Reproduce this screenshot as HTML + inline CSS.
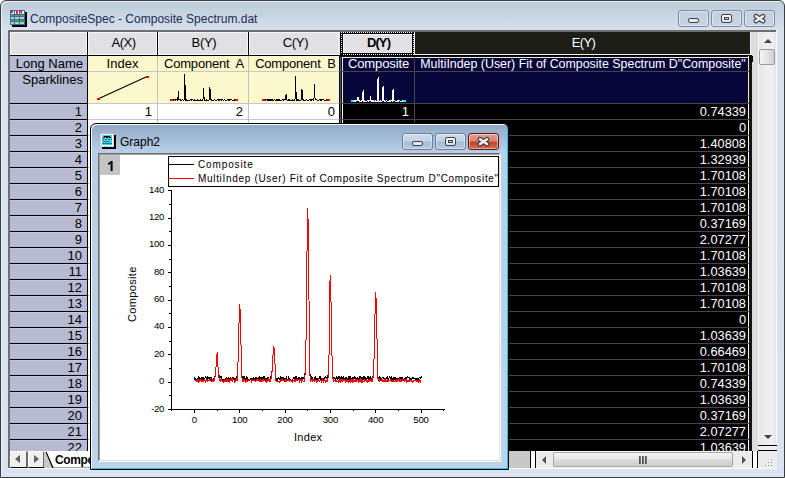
<!DOCTYPE html>
<html><head><meta charset="utf-8">
<style>
*{box-sizing:border-box}
html,body{margin:0;padding:0;width:785px;height:478px;overflow:hidden;background:#fff}
body{position:relative;font-family:"Liberation Sans",sans-serif}
.a{position:absolute}
#win{position:absolute;left:0;top:0;width:785px;height:478px;border:1px solid #3c3c3c;border-radius:6px 6px 0 0;
 background:linear-gradient(#bccbda 0px,#d6e2ee 30px,#d9e4f0 478px);box-shadow:inset 1px 1px 0 #eef3f8}
.ttl{position:absolute;left:30px;top:12px;font-size:12px;line-height:14px;color:#1e2a50;white-space:nowrap}
.tb{position:absolute;height:17px;border:1px solid #7d8aa3;border-radius:3px;background:linear-gradient(#c2d0df,#c6d3e2);box-shadow:inset 0 0 0 1px rgba(255,255,255,.45)}
.cell{position:absolute;font-size:13px;white-space:nowrap;line-height:16px}
.rh{position:absolute;left:10px;width:77px;height:16px;text-align:right;padding-right:5px;font-size:13px;line-height:16px;color:#000}
.ev{position:absolute;left:415px;width:333px;height:16px;text-align:right;padding-right:2px;font-size:12.8px;line-height:16px;color:#fff}
.hl{position:absolute;left:10px;width:77px;height:1px;background:#000;box-shadow:0 1px 0 #c6c9de}
.dl{position:absolute;left:339px;width:410px;height:1px;background:#464646}
</style></head><body>
<div id="win"></div>
<svg class="a" style="left:10px;top:10px" width="17" height="17" viewBox="0 0 17 17" shape-rendering="crispEdges">
<rect x="2" y="2" width="15" height="15" fill="#000"/>
<rect x="0" y="0" width="15" height="15" fill="#5858c4"/>
<rect x="1" y="1" width="3" height="3" fill="#fff"/><rect x="5" y="1" width="4" height="3" fill="#fff"/><rect x="10" y="1" width="4" height="3" fill="#fff"/><rect x="1" y="5" width="3" height="1" fill="#10d010"/><rect x="5" y="5" width="4" height="1" fill="#10d010"/><rect x="10" y="5" width="4" height="1" fill="#10d010"/><rect x="1" y="7" width="3" height="2" fill="#90f090"/><rect x="5" y="7" width="4" height="2" fill="#90f090"/><rect x="10" y="7" width="4" height="2" fill="#90f090"/><rect x="1" y="10" width="3" height="1" fill="#10d010"/><rect x="5" y="10" width="4" height="1" fill="#10d010"/><rect x="10" y="10" width="4" height="1" fill="#10d010"/><rect x="1" y="12" width="3" height="2" fill="#90f090"/><rect x="5" y="12" width="4" height="2" fill="#90f090"/><rect x="10" y="12" width="4" height="2" fill="#90f090"/><rect x="1" y="1" width="2" height="2" fill="#f22"/><rect x="6" y="1" width="2" height="3" fill="#f22"/><rect x="10" y="1" width="2" height="2" fill="#f22"/><rect x="11" y="3" width="2" height="1" fill="#f88"/>
</svg>
<div class="ttl">CompositeSpec - Composite Spectrum.dat</div>
<div class="tb" style="left:678px;top:10px;width:31px"></div><div class="tb" style="left:711px;top:10px;width:31px"></div><div class="tb" style="left:744px;top:10px;width:31px"></div>
<div class="a" style="left:688px;top:18px;width:11px;height:5px;border:1px solid #3c4250;border-radius:2px;background:#ebe9e4"></div><div class="a" style="left:721px;top:14px;width:11px;height:9px;border:1px solid #3c4250;border-radius:2px;background:linear-gradient(#fff,#e2e0da)"></div><div class="a" style="left:724px;top:17px;width:5px;height:3px;border:1px solid #3c4250;background:#c8d0dc"></div><svg class="a" style="left:752px;top:12px" width="15" height="13" viewBox="0 0 15 13"><path d="M4 4.3 L11 9 M11 4.3 L4 9" stroke="#3a3e4a" stroke-width="4.8" stroke-linecap="round"/><path d="M4 4.3 L11 9 M11 4.3 L4 9" stroke="#f4f3f0" stroke-width="2.5" stroke-linecap="round"/></svg>

<div class="a" style="left:8px;top:30px;width:768px;height:438px;background:#dcdbe0;border-top:2px solid #6e6e6e;border-left:2px solid #6e6e6e"></div>
<div class="a" style="left:776px;top:30px;width:1px;height:439px;background:#fff"></div>
<div class="a" style="left:8px;top:468px;width:769px;height:1px;background:#fff"></div>
<div class="a" style="left:10px;top:32px;width:330px;height:23px;background:#e1e0e4"></div>
<div class="a" style="left:10px;top:32px;width:1px;height:23px;background:#f6f6f8"></div>
<div class="a" style="left:88px;top:32px;width:1px;height:23px;background:#f6f6f8"></div>
<div class="a" style="left:158px;top:32px;width:1px;height:23px;background:#f6f6f8"></div>
<div class="a" style="left:249px;top:32px;width:1px;height:23px;background:#f6f6f8"></div>
<div class="a" style="left:86px;top:32px;width:1px;height:23px;background:#f6f6f8"></div>
<div class="a" style="left:156px;top:32px;width:1px;height:23px;background:#f6f6f8"></div>
<div class="a" style="left:247px;top:32px;width:1px;height:23px;background:#f6f6f8"></div>
<div class="a" style="left:338px;top:32px;width:1px;height:23px;background:#f6f6f8"></div>
<div class="a" style="left:10px;top:54px;width:330px;height:1px;background:#f6f6f8"></div>
<div class="a" style="left:10px;top:32px;width:330px;height:1px;background:#f6f6f8"></div>
<div class="a" style="left:415px;top:32px;width:335px;height:22px;background:#1e1e18"></div>
<div class="a" style="left:415px;top:54px;width:336px;height:1px;background:#f0f0f0"></div>
<div class="a" style="left:750px;top:32px;width:1px;height:23px;background:#f0f0f0"></div>
<div class="a" style="left:87px;top:32px;width:1px;height:23px;background:#000"></div>
<div class="a" style="left:157px;top:32px;width:1px;height:23px;background:#000"></div>
<div class="a" style="left:248px;top:32px;width:1px;height:23px;background:#000"></div>
<div class="a" style="left:10px;top:55px;width:742px;height:1px;background:#000"></div>
<div class="a" style="left:340px;top:32px;width:75px;height:24px;background:#000"></div>
<div class="a" style="left:343px;top:34px;width:69px;height:19px;background:#e1e0e4;border-top:1px solid #f6f6f8;border-left:1px solid #f6f6f8"></div>
<div class="a" style="left:341px;top:32px;width:1px;height:22px;background:repeating-linear-gradient(#fff 0 1px,transparent 1px 2px)"></div>
<div class="a" style="left:342px;top:32px;width:70px;height:1px;background:repeating-linear-gradient(90deg,transparent 0 1px,#fff 1px 2px)"></div>
<div class="a" style="left:342px;top:54px;width:70px;height:1px;background:repeating-linear-gradient(90deg,transparent 0 1px,#fff 1px 2px)"></div>
<div class="a" style="left:413px;top:33px;width:1px;height:22px;background:repeating-linear-gradient(transparent 0 1px,#fff 1px 2px)"></div>
<div class="a" style="left:414px;top:32px;width:1px;height:23px;background:#f0f0f0"></div>
<div class="cell" style="left:89px;top:35px;width:69px;text-align:center;color:#000;letter-spacing:-0.5px">A(X)</div>
<div class="cell" style="left:159px;top:35px;width:90px;text-align:center;color:#000;letter-spacing:-0.3px">B(Y)</div>
<div class="cell" style="left:250px;top:35px;width:91px;text-align:center;color:#000;letter-spacing:-0.3px">C(Y)</div>
<div class="cell" style="left:341px;top:35px;width:75px;text-align:center;color:#000;font-weight:bold;letter-spacing:-0.9px">D(Y)</div>
<div class="cell" style="left:416px;top:35px;width:335px;text-align:center;color:#fff;letter-spacing:-0.6px">E(Y)</div>

<div class="a" style="left:10px;top:56px;width:77px;height:395px;background:#b6bad3"></div>
<div class="a" style="left:87px;top:56px;width:1px;height:395px;background:#000"></div>
<div class="hl" style="top:71px"></div>
<div class="hl" style="top:103px"></div>
<div class="rh" style="top:56px;padding-right:4px">Long Name</div>
<div class="rh" style="top:72px;padding-right:4px">Sparklines</div>

<div class="a" style="left:88px;top:56px;width:251px;height:48px;background:#fbf8cb"></div>
<div class="a" style="left:88px;top:71px;width:251px;height:1px;background:#c8c8c8"></div>
<div class="a" style="left:88px;top:103px;width:251px;height:1px;background:#c8c8c8"></div>
<div class="a" style="left:157px;top:56px;width:1px;height:67px;background:#c0c0c0"></div>
<div class="a" style="left:248px;top:56px;width:1px;height:67px;background:#c0c0c0"></div>
<div class="cell" style="left:88px;top:56px;width:69px;text-align:center">Index</div>
<div class="cell" style="left:159px;top:56px;width:90px;text-align:center;letter-spacing:-0.2px">Component&nbsp; A</div>
<div class="cell" style="left:250px;top:56px;width:91px;text-align:center;letter-spacing:-0.2px">Component&nbsp; B</div>
<div class="a" style="left:88px;top:104px;width:251px;height:347px;background:repeating-linear-gradient(#fff 0 15px,#c8c8c8 15px 16px)"></div>
<div class="a" style="left:88px;top:119px;width:251px;height:1px;background:#c8c8c8"></div>
<div class="a" style="left:157px;top:104px;width:1px;height:20px;background:#c0c0c0"></div>
<div class="a" style="left:248px;top:104px;width:1px;height:20px;background:#c0c0c0"></div>
<div class="cell" style="left:88px;top:104px;width:69px;text-align:right;padding-right:5px">1</div>
<div class="cell" style="left:158px;top:104px;width:90px;text-align:right;padding-right:5px">2</div>
<div class="cell" style="left:249px;top:104px;width:91px;text-align:right;padding-right:5px">0</div>

<div class="a" style="left:339px;top:56px;width:410px;height:48px;background:#07063a"></div>
<div class="a" style="left:339px;top:104px;width:410px;height:347px;background:#000"></div>
<div class="a" style="left:340px;top:57px;width:1px;height:394px;background:#505050"></div>
<div class="a" style="left:342px;top:57px;width:407px;height:394px;border:1px solid #f4f0b0;border-bottom:none"></div>
<div class="a" style="left:342px;top:104px;width:1px;height:347px;background:#f8f8f8"></div>
<div class="a" style="left:748px;top:104px;width:1px;height:347px;background:#f8f8f8"></div>
<div class="a" style="left:414px;top:57px;width:1px;height:394px;background:#464646"></div>
<div class="a" style="left:749px;top:56px;width:3px;height:395px;background:#141414"></div>
<div class="a" style="left:748px;top:56px;width:5px;height:6px;background:#000;border-left:1px solid #f4f0b0"></div>
<div class="dl" style="top:71px"></div>
<div class="dl" style="top:103px"></div>
<div class="cell" style="left:342px;top:56px;width:73px;text-align:center;color:#fff;letter-spacing:-0.1px">Composite</div>
<div class="cell" style="left:416.5px;top:56px;width:333px;text-align:center;color:#fff;font-size:12.4px">MultiIndep (User) Fit of Composite Spectrum D"Composite"</div>
<div class="cell" style="left:342px;top:104px;width:72px;text-align:right;padding-right:5px;color:#fff">1</div>
<div class="rh" style="top:104px">1</div><div class="ev" style="top:104px">0.74339</div><div class="hl" style="top:119px"></div><div class="dl" style="top:119px"></div><div class="rh" style="top:120px">2</div><div class="ev" style="top:120px">0</div><div class="hl" style="top:135px"></div><div class="dl" style="top:135px"></div><div class="rh" style="top:136px">3</div><div class="ev" style="top:136px">1.40808</div><div class="hl" style="top:151px"></div><div class="dl" style="top:151px"></div><div class="rh" style="top:152px">4</div><div class="ev" style="top:152px">1.32939</div><div class="hl" style="top:167px"></div><div class="dl" style="top:167px"></div><div class="rh" style="top:168px">5</div><div class="ev" style="top:168px">1.70108</div><div class="hl" style="top:183px"></div><div class="dl" style="top:183px"></div><div class="rh" style="top:184px">6</div><div class="ev" style="top:184px">1.70108</div><div class="hl" style="top:199px"></div><div class="dl" style="top:199px"></div><div class="rh" style="top:200px">7</div><div class="ev" style="top:200px">1.70108</div><div class="hl" style="top:215px"></div><div class="dl" style="top:215px"></div><div class="rh" style="top:216px">8</div><div class="ev" style="top:216px">0.37169</div><div class="hl" style="top:231px"></div><div class="dl" style="top:231px"></div><div class="rh" style="top:232px">9</div><div class="ev" style="top:232px">2.07277</div><div class="hl" style="top:247px"></div><div class="dl" style="top:247px"></div><div class="rh" style="top:248px">10</div><div class="ev" style="top:248px">1.70108</div><div class="hl" style="top:263px"></div><div class="dl" style="top:263px"></div><div class="rh" style="top:264px">11</div><div class="ev" style="top:264px">1.03639</div><div class="hl" style="top:279px"></div><div class="dl" style="top:279px"></div><div class="rh" style="top:280px">12</div><div class="ev" style="top:280px">1.70108</div><div class="hl" style="top:295px"></div><div class="dl" style="top:295px"></div><div class="rh" style="top:296px">13</div><div class="ev" style="top:296px">1.70108</div><div class="hl" style="top:311px"></div><div class="dl" style="top:311px"></div><div class="rh" style="top:312px">14</div><div class="ev" style="top:312px">0</div><div class="hl" style="top:327px"></div><div class="dl" style="top:327px"></div><div class="rh" style="top:328px">15</div><div class="ev" style="top:328px">1.03639</div><div class="hl" style="top:343px"></div><div class="dl" style="top:343px"></div><div class="rh" style="top:344px">16</div><div class="ev" style="top:344px">0.66469</div><div class="hl" style="top:359px"></div><div class="dl" style="top:359px"></div><div class="rh" style="top:360px">17</div><div class="ev" style="top:360px">1.70108</div><div class="hl" style="top:375px"></div><div class="dl" style="top:375px"></div><div class="rh" style="top:376px">18</div><div class="ev" style="top:376px">0.74339</div><div class="hl" style="top:391px"></div><div class="dl" style="top:391px"></div><div class="rh" style="top:392px">19</div><div class="ev" style="top:392px">1.03639</div><div class="hl" style="top:407px"></div><div class="dl" style="top:407px"></div><div class="rh" style="top:408px">20</div><div class="ev" style="top:408px">0.37169</div><div class="hl" style="top:423px"></div><div class="dl" style="top:423px"></div><div class="rh" style="top:424px">21</div><div class="ev" style="top:424px">2.07277</div><div class="hl" style="top:439px"></div><div class="dl" style="top:439px"></div><div class="rh" style="top:440px">22</div><div class="ev" style="top:440px">1.03639</div>
<svg class="a" style="left:0;top:0" width="785" height="120" viewBox="0 0 785 120"><line x1="99" y1="98.5" x2="146" y2="77" stroke="#000" stroke-width="1.1"/><rect x="97" y="98" width="3" height="2" fill="#f00"/><rect x="146" y="76" width="3" height="2" fill="#f00"/><rect x="172" y="99" width="1" height="1" fill="#000"/><rect x="173" y="99" width="1" height="2" fill="#000"/><rect x="174" y="99" width="1" height="1" fill="#000"/><rect x="175" y="99" width="1" height="2" fill="#000"/><rect x="176" y="99" width="1" height="1" fill="#000"/><rect x="177" y="97" width="1" height="4" fill="#000"/><rect x="178" y="91" width="1" height="9" fill="#000"/><rect x="179" y="99" width="1" height="1" fill="#000"/><rect x="180" y="99" width="1" height="2" fill="#000"/><rect x="181" y="100" width="1" height="1" fill="#000"/><rect x="182" y="99" width="1" height="1" fill="#000"/><rect x="183" y="100" width="1" height="1" fill="#000"/><rect x="184" y="74" width="1" height="26" fill="#000"/><rect x="185" y="85" width="1" height="16" fill="#000"/><rect x="186" y="99" width="1" height="2" fill="#000"/><rect x="187" y="100" width="1" height="1" fill="#000"/><rect x="188" y="100" width="1" height="1" fill="#000"/><rect x="189" y="100" width="1" height="1" fill="#000"/><rect x="190" y="99" width="1" height="1" fill="#000"/><rect x="191" y="99" width="1" height="2" fill="#000"/><rect x="192" y="99" width="1" height="1" fill="#000"/><rect x="193" y="100" width="1" height="1" fill="#000"/><rect x="194" y="99" width="1" height="2" fill="#000"/><rect x="195" y="100" width="1" height="1" fill="#000"/><rect x="196" y="100" width="1" height="1" fill="#000"/><rect x="197" y="99" width="1" height="2" fill="#000"/><rect x="198" y="100" width="1" height="1" fill="#000"/><rect x="199" y="100" width="1" height="1" fill="#000"/><rect x="200" y="99" width="1" height="2" fill="#000"/><rect x="201" y="100" width="1" height="1" fill="#000"/><rect x="202" y="99" width="1" height="2" fill="#000"/><rect x="203" y="88" width="1" height="11" fill="#000"/><rect x="204" y="97" width="1" height="4" fill="#000"/><rect x="205" y="100" width="1" height="1" fill="#000"/><rect x="206" y="99" width="1" height="2" fill="#000"/><rect x="207" y="100" width="1" height="1" fill="#000"/><rect x="208" y="100" width="1" height="1" fill="#000"/><rect x="209" y="87" width="1" height="13" fill="#000"/><rect x="210" y="89" width="1" height="11" fill="#000"/><rect x="211" y="99" width="1" height="2" fill="#000"/><rect x="212" y="100" width="1" height="1" fill="#000"/><rect x="213" y="100" width="1" height="1" fill="#000"/><rect x="214" y="99" width="1" height="1" fill="#000"/><rect x="215" y="100" width="1" height="1" fill="#000"/><rect x="216" y="100" width="1" height="1" fill="#000"/><rect x="217" y="99" width="1" height="1" fill="#000"/><rect x="218" y="99" width="1" height="2" fill="#000"/><rect x="219" y="99" width="1" height="2" fill="#000"/><rect x="220" y="99" width="1" height="1" fill="#000"/><rect x="221" y="99" width="1" height="2" fill="#000"/><rect x="222" y="99" width="1" height="1" fill="#000"/><rect x="223" y="100" width="1" height="1" fill="#000"/><rect x="224" y="99" width="1" height="1" fill="#000"/><rect x="225" y="100" width="1" height="1" fill="#000"/><rect x="226" y="100" width="1" height="1" fill="#000"/><rect x="227" y="99" width="1" height="1" fill="#000"/><rect x="228" y="99" width="1" height="2" fill="#000"/><rect x="229" y="99" width="1" height="2" fill="#000"/><rect x="230" y="99" width="1" height="1" fill="#000"/><rect x="231" y="99" width="1" height="1" fill="#000"/><rect x="232" y="100" width="1" height="1" fill="#000"/><rect x="233" y="100" width="1" height="1" fill="#000"/><rect x="234" y="99" width="1" height="2" fill="#000"/><rect x="235" y="100" width="1" height="1" fill="#000"/><rect x="170" y="99" width="3" height="2" fill="#f00"/><rect x="235" y="99" width="3" height="2" fill="#f00"/><rect x="264" y="99" width="1" height="1" fill="#000"/><rect x="265" y="99" width="1" height="2" fill="#000"/><rect x="266" y="99" width="1" height="1" fill="#000"/><rect x="267" y="99" width="1" height="2" fill="#000"/><rect x="268" y="99" width="1" height="2" fill="#000"/><rect x="269" y="99" width="1" height="2" fill="#000"/><rect x="270" y="99" width="1" height="2" fill="#000"/><rect x="271" y="99" width="1" height="2" fill="#000"/><rect x="272" y="99" width="1" height="2" fill="#000"/><rect x="273" y="100" width="1" height="1" fill="#000"/><rect x="274" y="99" width="1" height="1" fill="#000"/><rect x="275" y="100" width="1" height="1" fill="#000"/><rect x="276" y="99" width="1" height="2" fill="#000"/><rect x="277" y="99" width="1" height="2" fill="#000"/><rect x="278" y="99" width="1" height="2" fill="#000"/><rect x="279" y="99" width="1" height="2" fill="#000"/><rect x="280" y="100" width="1" height="1" fill="#000"/><rect x="281" y="100" width="1" height="1" fill="#000"/><rect x="282" y="99" width="1" height="1" fill="#000"/><rect x="283" y="99" width="1" height="2" fill="#000"/><rect x="284" y="99" width="1" height="1" fill="#000"/><rect x="285" y="95" width="1" height="5" fill="#000"/><rect x="286" y="94" width="1" height="6" fill="#000"/><rect x="287" y="100" width="1" height="1" fill="#000"/><rect x="288" y="99" width="1" height="2" fill="#000"/><rect x="289" y="99" width="1" height="2" fill="#000"/><rect x="290" y="100" width="1" height="1" fill="#000"/><rect x="291" y="100" width="1" height="1" fill="#000"/><rect x="292" y="99" width="1" height="2" fill="#000"/><rect x="293" y="100" width="1" height="1" fill="#000"/><rect x="294" y="99" width="1" height="2" fill="#000"/><rect x="295" y="76" width="1" height="23" fill="#000"/><rect x="296" y="92" width="1" height="9" fill="#000"/><rect x="297" y="99" width="1" height="2" fill="#000"/><rect x="298" y="99" width="1" height="2" fill="#000"/><rect x="299" y="100" width="1" height="1" fill="#000"/><rect x="300" y="100" width="1" height="1" fill="#000"/><rect x="301" y="89" width="1" height="11" fill="#000"/><rect x="302" y="90" width="1" height="10" fill="#000"/><rect x="303" y="99" width="1" height="2" fill="#000"/><rect x="304" y="100" width="1" height="1" fill="#000"/><rect x="305" y="100" width="1" height="1" fill="#000"/><rect x="306" y="99" width="1" height="1" fill="#000"/><rect x="307" y="100" width="1" height="1" fill="#000"/><rect x="308" y="100" width="1" height="1" fill="#000"/><rect x="309" y="99" width="1" height="1" fill="#000"/><rect x="310" y="99" width="1" height="2" fill="#000"/><rect x="311" y="99" width="1" height="2" fill="#000"/><rect x="312" y="99" width="1" height="1" fill="#000"/><rect x="313" y="98" width="1" height="3" fill="#000"/><rect x="314" y="84" width="1" height="14" fill="#000"/><rect x="315" y="98" width="1" height="2" fill="#000"/><rect x="316" y="99" width="1" height="1" fill="#000"/><rect x="317" y="100" width="1" height="1" fill="#000"/><rect x="318" y="100" width="1" height="1" fill="#000"/><rect x="319" y="99" width="1" height="1" fill="#000"/><rect x="320" y="99" width="1" height="2" fill="#000"/><rect x="321" y="99" width="1" height="2" fill="#000"/><rect x="322" y="99" width="1" height="1" fill="#000"/><rect x="323" y="99" width="1" height="1" fill="#000"/><rect x="324" y="100" width="1" height="1" fill="#000"/><rect x="325" y="100" width="1" height="1" fill="#000"/><rect x="326" y="99" width="1" height="2" fill="#000"/><rect x="327" y="100" width="1" height="1" fill="#000"/><rect x="262" y="99" width="3" height="2" fill="#f00"/><rect x="327" y="99" width="3" height="2" fill="#f00"/><rect x="353" y="100" width="1" height="1" fill="#fff"/><rect x="354" y="100" width="1" height="2" fill="#fff"/><rect x="355" y="100" width="1" height="2" fill="#fff"/><rect x="356" y="100" width="1" height="1" fill="#fff"/><rect x="357" y="97" width="1" height="4" fill="#fff"/><rect x="358" y="97" width="1" height="4" fill="#fff"/><rect x="359" y="100" width="1" height="2" fill="#fff"/><rect x="360" y="101" width="1" height="1" fill="#fff"/><rect x="361" y="100" width="1" height="2" fill="#fff"/><rect x="362" y="92" width="1" height="9" fill="#fff"/><rect x="363" y="90" width="1" height="12" fill="#fff"/><rect x="364" y="100" width="1" height="2" fill="#fff"/><rect x="365" y="101" width="1" height="1" fill="#fff"/><rect x="366" y="101" width="1" height="1" fill="#fff"/><rect x="367" y="100" width="1" height="1" fill="#fff"/><rect x="368" y="100" width="1" height="2" fill="#fff"/><rect x="369" y="100" width="1" height="1" fill="#fff"/><rect x="370" y="96" width="1" height="5" fill="#fff"/><rect x="371" y="100" width="1" height="2" fill="#fff"/><rect x="372" y="100" width="1" height="2" fill="#fff"/><rect x="373" y="100" width="1" height="2" fill="#fff"/><rect x="374" y="101" width="1" height="1" fill="#fff"/><rect x="375" y="100" width="1" height="2" fill="#fff"/><rect x="376" y="101" width="1" height="1" fill="#fff"/><rect x="377" y="79" width="1" height="23" fill="#fff"/><rect x="378" y="77" width="1" height="25" fill="#fff"/><rect x="379" y="101" width="1" height="1" fill="#fff"/><rect x="380" y="100" width="1" height="2" fill="#fff"/><rect x="381" y="101" width="1" height="1" fill="#fff"/><rect x="382" y="87" width="1" height="14" fill="#fff"/><rect x="383" y="86" width="1" height="15" fill="#fff"/><rect x="384" y="100" width="1" height="2" fill="#fff"/><rect x="385" y="101" width="1" height="1" fill="#fff"/><rect x="386" y="100" width="1" height="1" fill="#fff"/><rect x="387" y="101" width="1" height="1" fill="#fff"/><rect x="388" y="101" width="1" height="1" fill="#fff"/><rect x="389" y="100" width="1" height="2" fill="#fff"/><rect x="390" y="100" width="1" height="2" fill="#fff"/><rect x="391" y="100" width="1" height="1" fill="#fff"/><rect x="392" y="90" width="1" height="12" fill="#fff"/><rect x="393" y="89" width="1" height="12" fill="#fff"/><rect x="394" y="100" width="1" height="1" fill="#fff"/><rect x="395" y="101" width="1" height="1" fill="#fff"/><rect x="396" y="101" width="1" height="1" fill="#fff"/><rect x="397" y="100" width="1" height="2" fill="#fff"/><rect x="398" y="100" width="1" height="2" fill="#fff"/><rect x="399" y="100" width="1" height="1" fill="#fff"/><rect x="400" y="101" width="1" height="1" fill="#fff"/><rect x="401" y="101" width="1" height="1" fill="#fff"/><rect x="402" y="100" width="1" height="2" fill="#fff"/><rect x="403" y="101" width="1" height="1" fill="#fff"/><rect x="351" y="100" width="3" height="2" fill="#0ff"/><rect x="403" y="100" width="3" height="2" fill="#0ff"/></svg>

<!-- vertical scrollbar -->
<div class="a" style="left:758px;top:32px;width:19px;height:419px;background:linear-gradient(90deg,#e6e6e6,#efefef 40%,#efefef 80%,#e4e4e4);border-left:1px solid #fafafa;border-right:1px solid #fafafa"></div>
<div class="a" style="left:763.5px;top:39px;width:0;height:0;border-left:4px solid transparent;border-right:4px solid transparent;border-bottom:4px solid #404040"></div>
<div class="a" style="left:759px;top:49px;width:16px;height:16px;border:1px solid #9a9a9a;border-radius:2px;background:linear-gradient(90deg,#f6f6f6,#e4e4e4 50%,#d0d0d0)"></div>
<div class="a" style="left:763.5px;top:435px;width:0;height:0;border-left:4px solid transparent;border-right:4px solid transparent;border-top:4px solid #404040"></div>
<div class="a" style="left:758px;top:445px;width:19px;height:6px;background:#f0f0f0;border-top:1px solid #000;border-bottom:1px solid #000"></div>

<!-- bottom bar -->
<div class="a" style="left:10px;top:451px;width:767px;height:17px;background:#ececec"></div>
<div class="a" style="left:10px;top:451px;width:18px;height:17px;background:#efefef;border-top:1px solid #fff;border-left:1px solid #fff;border-right:2px solid #6a6a6a;border-bottom:1px solid #000"></div>
<div class="a" style="left:28px;top:451px;width:17px;height:17px;background:#efefef;border-top:1px solid #fff;border-left:1px solid #fff;border-right:2px solid #6a6a6a;border-bottom:1px solid #000"></div>
<div class="a" style="left:15px;top:455px;width:0;height:0;border-top:4.5px solid transparent;border-bottom:4.5px solid transparent;border-right:5px solid #606060"></div>
<div class="a" style="left:34px;top:455px;width:0;height:0;border-top:4.5px solid transparent;border-bottom:4.5px solid transparent;border-left:5px solid #606060"></div>
<div class="a" style="left:44px;top:451px;width:470px;height:17px;background:#fff;border-bottom:1px solid #a0a0a0"></div>
<svg class="a" style="left:44px;top:451px" width="12" height="17"><path d="M0 0 V17 H9 Z" fill="#c8c8c8"/><path d="M2 1 L9 17" stroke="#000" stroke-width="1.3"/></svg>
<div class="cell" style="left:55px;top:452px;font-weight:bold;font-size:12px;letter-spacing:-0.4px">Composite</div>
<div class="a" style="left:509px;top:451px;width:21px;height:17px;background:#c8c8c8"></div>
<div class="a" style="left:530px;top:451px;width:6px;height:17px;background:#fff;border-left:1px solid #000;border-right:1px solid #000"></div>
<div class="a" style="left:536px;top:451px;width:216px;height:17px;background:#ececec;border-top:1px solid #fafafa"></div>
<div class="a" style="left:542px;top:456px;width:0;height:0;border-top:4px solid transparent;border-bottom:4px solid transparent;border-right:4px solid #505050"></div>
<div class="a" style="left:742px;top:456px;width:0;height:0;border-top:4px solid transparent;border-bottom:4px solid transparent;border-left:4px solid #505050"></div>
<div class="a" style="left:553px;top:452px;width:180px;height:15px;border:1px solid #a8a8a8;border-radius:2px;background:linear-gradient(#f4f4f4,#e8e8e8 45%,#d8d8d8 55%,#cfcfcf)"></div>
<div class="a" style="left:639px;top:456px;width:2px;height:8px;background:linear-gradient(90deg,#444,#888)"></div>
<div class="a" style="left:642px;top:456px;width:2px;height:8px;background:linear-gradient(90deg,#444,#888)"></div>
<div class="a" style="left:645px;top:456px;width:2px;height:8px;background:linear-gradient(90deg,#444,#888)"></div>
<div class="a" style="left:752px;top:451px;width:6px;height:17px;background:#fff;border-left:1px solid #000;border-right:1px solid #000"></div>
<div class="a" style="left:758px;top:451px;width:18px;height:17px;background:#ececec"></div><div class="a" style="left:771px;top:459px;width:1px;height:1px;background:#888;box-shadow:-1px -1px 0 #fff"></div><div class="a" style="left:768px;top:462px;width:1px;height:1px;background:#888;box-shadow:-1px -1px 0 #fff"></div><div class="a" style="left:771px;top:462px;width:1px;height:1px;background:#888;box-shadow:-1px -1px 0 #fff"></div><div class="a" style="left:765px;top:465px;width:1px;height:1px;background:#888;box-shadow:-1px -1px 0 #fff"></div><div class="a" style="left:768px;top:465px;width:1px;height:1px;background:#888;box-shadow:-1px -1px 0 #fff"></div><div class="a" style="left:771px;top:465px;width:1px;height:1px;background:#888;box-shadow:-1px -1px 0 #fff"></div>

<!-- Graph window -->
<div class="a" style="left:90px;top:123px;width:419px;height:347px;border:1px solid #000;border-radius:6px 6px 0 0;background:linear-gradient(#92acc8 2px,#b8cfe7 28px,#bed3ea);box-shadow:inset 1px 1px 0 #fff, inset -1px -1px 0 #18c8e8"></div>
<svg class="a" style="left:100px;top:133px" width="17" height="17" viewBox="0 0 17 17" shape-rendering="crispEdges">
<rect x="2" y="2" width="14" height="14" fill="#000"/>
<rect x="0" y="0" width="14" height="14" fill="#fff"/>
<rect x="0" y="0" width="14" height="1" fill="#f0a0a0"/>
<rect x="0" y="1" width="1" height="13" fill="#f4c0c0"/><rect x="13" y="1" width="1" height="13" fill="#f4c0c0"/>
<rect x="2" y="2" width="10" height="10" fill="#10e8f0"/>
<path d="M3 4.5 h1 v-1 h2 v1 h1 v-1 h2 v1 h2" stroke="#000" fill="none"/>
<path d="M2 6.5 h10" stroke="#e03030" stroke-dasharray="2 1"/>
<path d="M3 8.5 h2 v-0 h5" stroke="#9050e0" fill="none"/>
<path d="M2 10.5 h10" stroke="#208080" fill="none"/>
<path d="M1 13.5 h12" stroke="#f08080" stroke-dasharray="1 2"/>
</svg>
<div class="a" style="left:120px;top:135px;font-size:12px;line-height:14px;color:#000;white-space:nowrap">Graph2</div>
<div class="tb" style="left:402px;top:133px;width:31px;border-color:#6c7c98;background:linear-gradient(#cddcec,#c2d3e6 45%,#a6bdd8 55%,#b4c9e0)"></div><div class="tb" style="left:435px;top:133px;width:31px;border-color:#6c7c98;background:linear-gradient(#cddcec,#c2d3e6 45%,#a6bdd8 55%,#b4c9e0)"></div><div class="tb" style="left:468px;top:133px;width:31px;border-color:#5a1818;background:linear-gradient(#e6a090,#dc8470 45%,#c44628 55%,#d06850)"></div>
<div class="a" style="left:412px;top:141px;width:11px;height:5px;border:1px solid #3c4250;border-radius:2px;background:#ebe9e4"></div><div class="a" style="left:445px;top:137px;width:11px;height:9px;border:1px solid #3c4250;border-radius:2px;background:linear-gradient(#fff,#e2e0da)"></div><div class="a" style="left:448px;top:140px;width:5px;height:3px;border:1px solid #3c4250;background:#c8d0dc"></div><svg class="a" style="left:476px;top:135px" width="15" height="13" viewBox="0 0 15 13"><path d="M4 4.3 L11 9 M11 4.3 L4 9" stroke="#3a3e4a" stroke-width="4.8" stroke-linecap="round"/><path d="M4 4.3 L11 9 M11 4.3 L4 9" stroke="#f4f3f0" stroke-width="2.5" stroke-linecap="round"/></svg>
<div class="a" style="left:98px;top:153px;width:402px;height:308px;background:#fff;border-top:1px solid #6c6c6c;border-left:1px solid #6c6c6c;border-bottom:1px solid #e0e0e0;border-right:1px solid #e0e0e0;box-shadow:1px 1px 0 #fafafa, inset 1px 1px 0 #a0a0a0"></div>
<div class="a" style="left:100px;top:155px;width:20px;height:20px;background:#c4c4c4"></div>
<svg class="a" style="left:100px;top:155px" width="20" height="20" viewBox="0 0 20 20"><path d="M10.6 6 H12.6 V16 H10.6 V8.6 Q9.5 9.6 8 10.1 V8.3 Q9.8 7.6 10.6 6 Z" fill="#000"/></svg>
<svg class="a" style="left:0;top:0" width="785" height="478" viewBox="0 0 785 478">
 <g stroke="#000" stroke-width="1" fill="none" shape-rendering="crispEdges">
  <rect x="168.5" y="156.5" width="330" height="29.5"/>
  <line x1="168" y1="164.5" x2="194" y2="164.5"/>
  <line x1="168" y1="409.6" x2="171" y2="409.6"/><line x1="168" y1="382.2" x2="171" y2="382.2"/><line x1="168" y1="354.8" x2="171" y2="354.8"/><line x1="168" y1="327.5" x2="171" y2="327.5"/><line x1="168" y1="300.1" x2="171" y2="300.1"/><line x1="168" y1="272.8" x2="171" y2="272.8"/><line x1="168" y1="245.4" x2="171" y2="245.4"/><line x1="168" y1="218.0" x2="171" y2="218.0"/><line x1="168" y1="190.7" x2="171" y2="190.7"/><line x1="169" y1="395.9" x2="171" y2="395.9"/><line x1="169" y1="368.5" x2="171" y2="368.5"/><line x1="169" y1="341.2" x2="171" y2="341.2"/><line x1="169" y1="313.8" x2="171" y2="313.8"/><line x1="169" y1="286.4" x2="171" y2="286.4"/><line x1="169" y1="259.1" x2="171" y2="259.1"/><line x1="169" y1="231.7" x2="171" y2="231.7"/><line x1="169" y1="204.4" x2="171" y2="204.4"/><line x1="194.4" y1="409" x2="194.4" y2="413"/><line x1="239.7" y1="409" x2="239.7" y2="413"/><line x1="285.0" y1="409" x2="285.0" y2="413"/><line x1="330.4" y1="409" x2="330.4" y2="413"/><line x1="375.7" y1="409" x2="375.7" y2="413"/><line x1="421.0" y1="409" x2="421.0" y2="413"/><line x1="171.7" y1="409" x2="171.7" y2="411"/><line x1="217.1" y1="409" x2="217.1" y2="411"/><line x1="262.4" y1="409" x2="262.4" y2="411"/><line x1="307.7" y1="409" x2="307.7" y2="411"/><line x1="353.0" y1="409" x2="353.0" y2="411"/><line x1="398.3" y1="409" x2="398.3" y2="411"/><line x1="443.7" y1="409" x2="443.7" y2="411"/>
  <path d="M171.5 190 V409.5 H445"/>
 </g>
 <line x1="168" y1="178.5" x2="194" y2="178.5" stroke="#f00" shape-rendering="crispEdges"/>
 <path d="M194.5 379.5 L194.5 377.5 L195.5 378.5 L195.5 380.5 L196.5 380.5 L196.5 380.5 L197.5 378.5 L197.5 380.5 L198.5 377.5 L198.5 378.5 L198.5 376.5 L199.5 377.5 L199.5 379.5 L200.5 379.5 L200.5 379.5 L201.5 377.5 L201.5 378.5 L202.5 380.5 L202.5 377.5 L203.5 379.5 L203.5 378.5 L203.5 377.5 L204.5 379.5 L204.5 378.5 L205.5 377.5 L205.5 376.5 L206.5 378.5 L206.5 379.5 L207.5 380.5 L207.5 377.5 L207.5 376.5 L208.5 377.5 L208.5 378.5 L209.5 377.5 L209.5 378.5 L210.5 380.5 L210.5 377.5 L211.5 377.5 L211.5 378.5 L212.5 380.5 L212.5 379.5 L212.5 380.5 L213.5 380.5 L213.5 378.5 L214.5 379.5 L214.5 377.5 L215.5 374.5 L215.5 370.5 L216.5 363.5 L216.5 355.5 L217.5 352.5 L217.5 355.5 L217.5 363.5 L218.5 370.5 L218.5 375.5 L219.5 375.5 L219.5 378.5 L220.5 377.5 L220.5 376.5 L221.5 376.5 L221.5 378.5 L222.5 380.5 L222.5 380.5 L222.5 379.5 L223.5 379.5 L223.5 380.5 L224.5 380.5 L224.5 380.5 L225.5 378.5 L225.5 379.5 L226.5 379.5 L226.5 377.5 L227.5 378.5 L227.5 380.5 L227.5 379.5 L228.5 377.5 L228.5 380.5 L229.5 378.5 L229.5 378.5 L230.5 378.5 L230.5 377.5 L231.5 379.5 L231.5 379.5 L232.5 378.5 L232.5 379.5 L232.5 377.5 L233.5 377.5 L233.5 377.5 L234.5 379.5 L234.5 379.5 L235.5 380.5 L235.5 379.5 L236.5 376.5 L236.5 376.5 L237.5 376.5 L237.5 376.5 L237.5 369.5 L238.5 355.5 L238.5 333.5 L239.5 313.5 L239.5 304.5 L240.5 313.5 L240.5 333.5 L241.5 355.5 L241.5 369.5 L241.5 374.5 L242.5 378.5 L242.5 377.5 L243.5 380.5 L243.5 376.5 L244.5 379.5 L244.5 376.5 L245.5 379.5 L245.5 380.5 L246.5 376.5 L246.5 378.5 L246.5 378.5 L247.5 377.5 L247.5 379.5 L248.5 379.5 L248.5 379.5 L249.5 380.5 L249.5 379.5 L250.5 378.5 L250.5 378.5 L251.5 378.5 L251.5 378.5 L251.5 378.5 L252.5 380.5 L252.5 379.5 L253.5 377.5 L253.5 379.5 L254.5 378.5 L254.5 380.5 L255.5 379.5 L255.5 377.5 L256.5 378.5 L256.5 376.5 L256.5 378.5 L257.5 378.5 L257.5 378.5 L258.5 378.5 L258.5 377.5 L259.5 376.5 L259.5 378.5 L260.5 377.5 L260.5 380.5 L261.5 380.5 L261.5 380.5 L261.5 377.5 L262.5 379.5 L262.5 377.5 L263.5 376.5 L263.5 379.5 L264.5 378.5 L264.5 376.5 L265.5 379.5 L265.5 378.5 L266.5 379.5 L266.5 377.5 L266.5 378.5 L267.5 380.5 L267.5 377.5 L268.5 380.5 L268.5 377.5 L269.5 380.5 L269.5 380.5 L270.5 379.5 L270.5 378.5 L270.5 376.5 L271.5 378.5 L271.5 374.5 L272.5 368.5 L272.5 359.5 L273.5 350.5 L273.5 346.5 L274.5 350.5 L274.5 359.5 L275.5 368.5 L275.5 374.5 L275.5 378.5 L276.5 378.5 L276.5 380.5 L277.5 380.5 L277.5 379.5 L278.5 377.5 L278.5 378.5 L279.5 379.5 L279.5 379.5 L280.5 377.5 L280.5 379.5 L280.5 376.5 L281.5 377.5 L281.5 378.5 L282.5 378.5 L282.5 377.5 L283.5 379.5 L283.5 377.5 L284.5 378.5 L284.5 380.5 L285.5 380.5 L285.5 379.5 L285.5 380.5 L286.5 376.5 L286.5 379.5 L287.5 379.5 L287.5 379.5 L288.5 379.5 L288.5 376.5 L289.5 379.5 L289.5 379.5 L290.5 380.5 L290.5 378.5 L290.5 379.5 L291.5 380.5 L291.5 380.5 L292.5 380.5 L292.5 379.5 L293.5 378.5 L293.5 377.5 L294.5 377.5 L294.5 378.5 L295.5 376.5 L295.5 377.5 L295.5 380.5 L296.5 376.5 L296.5 377.5 L297.5 379.5 L297.5 378.5 L298.5 377.5 L298.5 378.5 L299.5 377.5 L299.5 379.5 L299.5 380.5 L300.5 380.5 L300.5 378.5 L301.5 377.5 L301.5 378.5 L302.5 377.5 L302.5 378.5 L303.5 377.5 L303.5 377.5 L304.5 380.5 L304.5 377.5 L304.5 375.5 L305.5 371.5 L305.5 356.5 L306.5 324.5 L306.5 275.5 L307.5 228.5 L307.5 208.5 L308.5 228.5 L308.5 275.5 L309.5 324.5 L309.5 356.5 L309.5 371.5 L310.5 376.5 L310.5 376.5 L311.5 376.5 L311.5 380.5 L312.5 377.5 L312.5 378.5 L313.5 379.5 L313.5 379.5 L314.5 379.5 L314.5 376.5 L314.5 377.5 L315.5 376.5 L315.5 379.5 L316.5 378.5 L316.5 380.5 L317.5 378.5 L317.5 379.5 L318.5 379.5 L318.5 380.5 L319.5 377.5 L319.5 376.5 L319.5 376.5 L320.5 379.5 L320.5 376.5 L321.5 379.5 L321.5 379.5 L322.5 380.5 L322.5 379.5 L323.5 379.5 L323.5 378.5 L324.5 379.5 L324.5 376.5 L324.5 377.5 L325.5 376.5 L325.5 377.5 L326.5 377.5 L326.5 377.5 L327.5 379.5 L327.5 375.5 L328.5 374.5 L328.5 365.5 L329.5 345.5 L329.5 316.5 L329.5 287.5 L330.5 275.5 L330.5 287.5 L331.5 316.5 L331.5 345.5 L332.5 365.5 L332.5 375.5 L333.5 378.5 L333.5 379.5 L333.5 378.5 L334.5 377.5 L334.5 378.5 L335.5 379.5 L335.5 380.5 L336.5 376.5 L336.5 378.5 L337.5 377.5 L337.5 379.5 L338.5 378.5 L338.5 376.5 L338.5 376.5 L339.5 380.5 L339.5 376.5 L340.5 378.5 L340.5 378.5 L341.5 377.5 L341.5 376.5 L342.5 380.5 L342.5 378.5 L343.5 376.5 L343.5 377.5 L343.5 378.5 L344.5 380.5 L344.5 379.5 L345.5 377.5 L345.5 380.5 L346.5 377.5 L346.5 380.5 L347.5 378.5 L347.5 378.5 L348.5 378.5 L348.5 379.5 L348.5 376.5 L349.5 376.5 L349.5 379.5 L350.5 376.5 L350.5 379.5 L351.5 378.5 L351.5 378.5 L352.5 377.5 L352.5 379.5 L353.5 379.5 L353.5 377.5 L353.5 377.5 L354.5 378.5 L354.5 376.5 L355.5 377.5 L355.5 379.5 L356.5 379.5 L356.5 378.5 L357.5 379.5 L357.5 377.5 L358.5 379.5 L358.5 379.5 L358.5 379.5 L359.5 380.5 L359.5 376.5 L360.5 377.5 L360.5 376.5 L361.5 379.5 L361.5 377.5 L362.5 377.5 L362.5 379.5 L362.5 379.5 L363.5 379.5 L363.5 376.5 L364.5 376.5 L364.5 379.5 L365.5 377.5 L365.5 380.5 L366.5 379.5 L366.5 379.5 L367.5 376.5 L367.5 378.5 L367.5 377.5 L368.5 380.5 L368.5 376.5 L369.5 377.5 L369.5 379.5 L370.5 376.5 L370.5 379.5 L371.5 379.5 L371.5 380.5 L372.5 376.5 L372.5 376.5 L372.5 378.5 L373.5 373.5 L373.5 367.5 L374.5 351.5 L374.5 326.5 L375.5 302.5 L375.5 292.5 L376.5 302.5 L376.5 326.5 L377.5 351.5 L377.5 367.5 L377.5 375.5 L378.5 379.5 L378.5 379.5 L379.5 376.5 L379.5 379.5 L380.5 380.5 L380.5 377.5 L381.5 379.5 L381.5 378.5 L382.5 377.5 L382.5 377.5 L382.5 377.5 L383.5 378.5 L383.5 377.5 L384.5 379.5 L384.5 379.5 L385.5 378.5 L385.5 378.5 L386.5 378.5 L386.5 377.5 L387.5 376.5 L387.5 378.5 L387.5 377.5 L388.5 380.5 L388.5 380.5 L389.5 376.5 L389.5 376.5 L390.5 377.5 L390.5 379.5 L391.5 376.5 L391.5 378.5 L391.5 379.5 L392.5 379.5 L392.5 379.5 L393.5 377.5 L393.5 380.5 L394.5 377.5 L394.5 379.5 L395.5 377.5 L395.5 380.5 L396.5 378.5 L396.5 377.5 L396.5 379.5 L397.5 378.5 L397.5 379.5 L398.5 379.5 L398.5 379.5 L399.5 377.5 L399.5 379.5 L400.5 377.5 L400.5 380.5 L401.5 378.5 L401.5 378.5 L401.5 378.5 L402.5 380.5 L402.5 377.5 L403.5 380.5 L403.5 379.5 L404.5 379.5 L404.5 378.5 L405.5 380.5 L405.5 377.5 L406.5 379.5 L406.5 376.5 L406.5 378.5 L407.5 376.5 L407.5 376.5 L408.5 377.5 L408.5 377.5 L409.5 378.5 L409.5 377.5 L410.5 379.5 L410.5 378.5 L411.5 380.5 L411.5 377.5 L411.5 380.5 L412.5 377.5 L412.5 377.5 L413.5 378.5 L413.5 377.5 L414.5 378.5 L414.5 378.5 L415.5 378.5 L415.5 380.5 L416.5 378.5 L416.5 377.5 L416.5 378.5 L417.5 378.5 L417.5 380.5 L418.5 380.5 L418.5 378.5 L419.5 377.5 L419.5 377.5 L420.5 378.5 L420.5 378.5 L421.5 376.5" stroke="#000" stroke-width="1" fill="none" shape-rendering="crispEdges"/>
 <path d="M194.5 381.5 L194.5 381.5 L195.5 380.5 L195.5 380.5 L196.5 380.5 L196.5 381.5 L197.5 379.5 L197.5 381.5 L198.5 379.5 L198.5 380.5 L198.5 382.5 L199.5 381.5 L199.5 381.5 L200.5 379.5 L200.5 380.5 L201.5 380.5 L201.5 381.5 L202.5 381.5 L202.5 380.5 L203.5 380.5 L203.5 381.5 L203.5 379.5 L204.5 380.5 L204.5 379.5 L205.5 381.5 L205.5 381.5 L206.5 379.5 L206.5 380.5 L207.5 380.5 L207.5 380.5 L207.5 381.5 L208.5 380.5 L208.5 380.5 L209.5 379.5 L209.5 380.5 L210.5 379.5 L210.5 378.5 L211.5 381.5 L211.5 380.5 L212.5 380.5 L212.5 381.5 L212.5 379.5 L213.5 381.5 L213.5 379.5 L214.5 380.5 L214.5 378.5 L215.5 375.5 L215.5 370.5 L216.5 363.5 L216.5 355.5 L217.5 352.5 L217.5 355.5 L217.5 363.5 L218.5 370.5 L218.5 376.5 L219.5 378.5 L219.5 379.5 L220.5 381.5 L220.5 379.5 L221.5 379.5 L221.5 380.5 L222.5 380.5 L222.5 381.5 L222.5 381.5 L223.5 382.5 L223.5 381.5 L224.5 381.5 L224.5 379.5 L225.5 381.5 L225.5 381.5 L226.5 381.5 L226.5 378.5 L227.5 380.5 L227.5 381.5 L227.5 381.5 L228.5 381.5 L228.5 379.5 L229.5 381.5 L229.5 382.5 L230.5 378.5 L230.5 379.5 L231.5 380.5 L231.5 379.5 L232.5 379.5 L232.5 381.5 L232.5 378.5 L233.5 379.5 L233.5 379.5 L234.5 380.5 L234.5 382.5 L235.5 381.5 L235.5 379.5 L236.5 380.5 L236.5 378.5 L237.5 380.5 L237.5 377.5 L237.5 369.5 L238.5 355.5 L238.5 333.5 L239.5 313.5 L239.5 304.5 L240.5 313.5 L240.5 333.5 L241.5 355.5 L241.5 369.5 L241.5 377.5 L242.5 378.5 L242.5 381.5 L243.5 381.5 L243.5 379.5 L244.5 379.5 L244.5 380.5 L245.5 380.5 L245.5 382.5 L246.5 380.5 L246.5 379.5 L246.5 379.5 L247.5 381.5 L247.5 381.5 L248.5 380.5 L248.5 380.5 L249.5 379.5 L249.5 380.5 L250.5 379.5 L250.5 379.5 L251.5 380.5 L251.5 382.5 L251.5 381.5 L252.5 379.5 L252.5 380.5 L253.5 380.5 L253.5 380.5 L254.5 379.5 L254.5 380.5 L255.5 381.5 L255.5 380.5 L256.5 379.5 L256.5 380.5 L256.5 380.5 L257.5 379.5 L257.5 380.5 L258.5 379.5 L258.5 379.5 L259.5 381.5 L259.5 379.5 L260.5 381.5 L260.5 380.5 L261.5 381.5 L261.5 380.5 L261.5 379.5 L262.5 379.5 L262.5 381.5 L263.5 379.5 L263.5 379.5 L264.5 380.5 L264.5 379.5 L265.5 380.5 L265.5 381.5 L266.5 381.5 L266.5 382.5 L266.5 380.5 L267.5 381.5 L267.5 380.5 L268.5 378.5 L268.5 379.5 L269.5 381.5 L269.5 379.5 L270.5 381.5 L270.5 379.5 L270.5 380.5 L271.5 377.5 L271.5 375.5 L272.5 369.5 L272.5 359.5 L273.5 350.5 L273.5 346.5 L274.5 350.5 L274.5 359.5 L275.5 368.5 L275.5 374.5 L275.5 380.5 L276.5 380.5 L276.5 381.5 L277.5 381.5 L277.5 381.5 L278.5 381.5 L278.5 381.5 L279.5 382.5 L279.5 382.5 L280.5 380.5 L280.5 380.5 L280.5 381.5 L281.5 380.5 L281.5 379.5 L282.5 380.5 L282.5 378.5 L283.5 379.5 L283.5 380.5 L284.5 381.5 L284.5 381.5 L285.5 379.5 L285.5 381.5 L285.5 379.5 L286.5 379.5 L286.5 381.5 L287.5 380.5 L287.5 380.5 L288.5 379.5 L288.5 380.5 L289.5 379.5 L289.5 381.5 L290.5 380.5 L290.5 380.5 L290.5 380.5 L291.5 381.5 L291.5 380.5 L292.5 382.5 L292.5 381.5 L293.5 380.5 L293.5 380.5 L294.5 379.5 L294.5 381.5 L295.5 381.5 L295.5 380.5 L295.5 379.5 L296.5 380.5 L296.5 379.5 L297.5 380.5 L297.5 379.5 L298.5 379.5 L298.5 379.5 L299.5 379.5 L299.5 382.5 L299.5 381.5 L300.5 379.5 L300.5 380.5 L301.5 379.5 L301.5 382.5 L302.5 379.5 L302.5 380.5 L303.5 381.5 L303.5 381.5 L304.5 381.5 L304.5 381.5 L304.5 377.5 L305.5 372.5 L305.5 356.5 L306.5 324.5 L306.5 275.5 L307.5 228.5 L307.5 208.5 L308.5 228.5 L308.5 275.5 L309.5 324.5 L309.5 356.5 L309.5 372.5 L310.5 379.5 L310.5 381.5 L311.5 379.5 L311.5 380.5 L312.5 379.5 L312.5 381.5 L313.5 379.5 L313.5 380.5 L314.5 380.5 L314.5 381.5 L314.5 380.5 L315.5 379.5 L315.5 379.5 L316.5 382.5 L316.5 380.5 L317.5 381.5 L317.5 381.5 L318.5 379.5 L318.5 379.5 L319.5 381.5 L319.5 379.5 L319.5 381.5 L320.5 380.5 L320.5 380.5 L321.5 380.5 L321.5 382.5 L322.5 379.5 L322.5 379.5 L323.5 381.5 L323.5 381.5 L324.5 379.5 L324.5 379.5 L324.5 379.5 L325.5 380.5 L325.5 382.5 L326.5 380.5 L326.5 380.5 L327.5 381.5 L327.5 380.5 L328.5 375.5 L328.5 365.5 L329.5 345.5 L329.5 316.5 L329.5 287.5 L330.5 275.5 L330.5 287.5 L331.5 316.5 L331.5 345.5 L332.5 365.5 L332.5 376.5 L333.5 380.5 L333.5 381.5 L333.5 379.5 L334.5 380.5 L334.5 380.5 L335.5 381.5 L335.5 381.5 L336.5 381.5 L336.5 380.5 L337.5 381.5 L337.5 381.5 L338.5 380.5 L338.5 379.5 L338.5 382.5 L339.5 379.5 L339.5 380.5 L340.5 382.5 L340.5 379.5 L341.5 379.5 L341.5 381.5 L342.5 381.5 L342.5 379.5 L343.5 379.5 L343.5 379.5 L343.5 380.5 L344.5 379.5 L344.5 379.5 L345.5 381.5 L345.5 381.5 L346.5 379.5 L346.5 381.5 L347.5 380.5 L347.5 381.5 L348.5 382.5 L348.5 380.5 L348.5 380.5 L349.5 380.5 L349.5 381.5 L350.5 379.5 L350.5 382.5 L351.5 379.5 L351.5 381.5 L352.5 379.5 L352.5 382.5 L353.5 380.5 L353.5 381.5 L353.5 379.5 L354.5 381.5 L354.5 381.5 L355.5 381.5 L355.5 379.5 L356.5 379.5 L356.5 381.5 L357.5 380.5 L357.5 379.5 L358.5 380.5 L358.5 379.5 L358.5 382.5 L359.5 380.5 L359.5 379.5 L360.5 378.5 L360.5 381.5 L361.5 379.5 L361.5 382.5 L362.5 380.5 L362.5 381.5 L362.5 382.5 L363.5 381.5 L363.5 381.5 L364.5 381.5 L364.5 379.5 L365.5 380.5 L365.5 380.5 L366.5 379.5 L366.5 381.5 L367.5 382.5 L367.5 379.5 L367.5 382.5 L368.5 381.5 L368.5 381.5 L369.5 379.5 L369.5 381.5 L370.5 380.5 L370.5 379.5 L371.5 381.5 L371.5 379.5 L372.5 380.5 L372.5 381.5 L372.5 379.5 L373.5 375.5 L373.5 367.5 L374.5 351.5 L374.5 326.5 L375.5 302.5 L375.5 292.5 L376.5 302.5 L376.5 326.5 L377.5 351.5 L377.5 367.5 L377.5 377.5 L378.5 379.5 L378.5 378.5 L379.5 378.5 L379.5 381.5 L380.5 380.5 L380.5 380.5 L381.5 380.5 L381.5 379.5 L382.5 379.5 L382.5 381.5 L382.5 381.5 L383.5 380.5 L383.5 381.5 L384.5 381.5 L384.5 379.5 L385.5 381.5 L385.5 378.5 L386.5 381.5 L386.5 380.5 L387.5 381.5 L387.5 379.5 L387.5 379.5 L388.5 381.5 L388.5 381.5 L389.5 380.5 L389.5 380.5 L390.5 380.5 L390.5 379.5 L391.5 381.5 L391.5 380.5 L391.5 380.5 L392.5 381.5 L392.5 380.5 L393.5 381.5 L393.5 381.5 L394.5 381.5 L394.5 381.5 L395.5 380.5 L395.5 381.5 L396.5 380.5 L396.5 381.5 L396.5 379.5 L397.5 381.5 L397.5 379.5 L398.5 380.5 L398.5 380.5 L399.5 378.5 L399.5 381.5 L400.5 381.5 L400.5 379.5 L401.5 379.5 L401.5 379.5 L401.5 381.5 L402.5 380.5 L402.5 379.5 L403.5 380.5 L403.5 380.5 L404.5 381.5 L404.5 379.5 L405.5 380.5 L405.5 379.5 L406.5 381.5 L406.5 378.5 L406.5 382.5 L407.5 380.5 L407.5 380.5 L408.5 381.5 L408.5 381.5 L409.5 379.5 L409.5 381.5 L410.5 380.5 L410.5 380.5 L411.5 381.5 L411.5 379.5 L411.5 380.5 L412.5 382.5 L412.5 381.5 L413.5 380.5 L413.5 381.5 L414.5 380.5 L414.5 380.5 L415.5 380.5 L415.5 380.5 L416.5 381.5 L416.5 379.5 L416.5 381.5 L417.5 381.5 L417.5 380.5 L418.5 380.5 L418.5 382.5 L419.5 381.5 L419.5 379.5 L420.5 382.5 L420.5 380.5 L421.5 381.5" stroke="#f00" stroke-width="1" fill="none" shape-rendering="crispEdges"/>
</svg>
<div class="cell" style="left:198px;top:158px;font-size:10px;line-height:14px;letter-spacing:0.87px">Composite</div>
<div class="cell" style="left:198px;top:172px;font-size:10px;line-height:14px;letter-spacing:0.68px">MultiIndep (User) Fit of Composite Spectrum D"Composite"</div>
<div class="cell" style="left:294px;top:429px;font-size:11px;letter-spacing:0.3px">Index</div>
<div class="cell" style="left:124px;top:322px;font-size:11px;letter-spacing:0.35px;transform:rotate(-90deg);transform-origin:0 0">Composite</div>
<div class="cell" style="left:120px;top:401px;width:44px;text-align:right;font-size:9.6px;letter-spacing:-0.35px">-20</div><div class="cell" style="left:120px;top:373px;width:44px;text-align:right;font-size:9.6px;letter-spacing:-0.35px">0</div><div class="cell" style="left:120px;top:346px;width:44px;text-align:right;font-size:9.6px;letter-spacing:-0.35px">20</div><div class="cell" style="left:120px;top:318px;width:44px;text-align:right;font-size:9.6px;letter-spacing:-0.35px">40</div><div class="cell" style="left:120px;top:291px;width:44px;text-align:right;font-size:9.6px;letter-spacing:-0.35px">60</div><div class="cell" style="left:120px;top:264px;width:44px;text-align:right;font-size:9.6px;letter-spacing:-0.35px">80</div><div class="cell" style="left:120px;top:236px;width:44px;text-align:right;font-size:9.6px;letter-spacing:-0.35px">100</div><div class="cell" style="left:120px;top:209px;width:44px;text-align:right;font-size:9.6px;letter-spacing:-0.35px">120</div><div class="cell" style="left:120px;top:182px;width:44px;text-align:right;font-size:9.6px;letter-spacing:-0.35px">140</div><div class="cell" style="left:174.40px;top:412px;width:40px;text-align:center;font-size:9.6px;letter-spacing:-0.2px">0</div><div class="cell" style="left:219.72px;top:412px;width:40px;text-align:center;font-size:9.6px;letter-spacing:-0.2px">100</div><div class="cell" style="left:265.04px;top:412px;width:40px;text-align:center;font-size:9.6px;letter-spacing:-0.2px">200</div><div class="cell" style="left:310.36px;top:412px;width:40px;text-align:center;font-size:9.6px;letter-spacing:-0.2px">300</div><div class="cell" style="left:355.68px;top:412px;width:40px;text-align:center;font-size:9.6px;letter-spacing:-0.2px">400</div><div class="cell" style="left:401.00px;top:412px;width:40px;text-align:center;font-size:9.6px;letter-spacing:-0.2px">500</div>
</body></html>
